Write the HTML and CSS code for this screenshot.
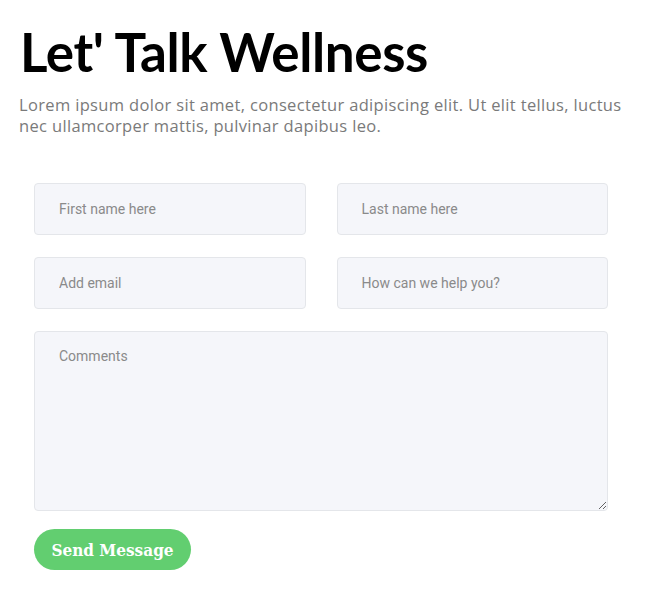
FILE: index.html
```html
<!DOCTYPE html>
<html lang="en">
<head>
<meta charset="utf-8">
<title>Let' Talk Wellness</title>
<link rel="stylesheet" href="styles.css">
</head>
<body>
<main class="page">
  <h1 class="title">Let' Talk Wellness</h1>
  <p class="lead">Lorem ipsum dolor sit amet, consectetur adipiscing elit. Ut elit tellus, luctus nec ullamcorper mattis, pulvinar dapibus leo.</p>
  <form class="contact">
    <div class="grid">
      <input class="field" type="text" placeholder="First name here">
      <input class="field" type="text" placeholder="Last name here">
      <input class="field" type="email" placeholder="Add email">
      <input class="field" type="text" placeholder="How can we help you?">
      <textarea class="field area" placeholder="Comments"></textarea>
    </div>
    <button class="send" type="button">Send Message</button>
  </form>
</main>
</body>
</html>
```
FILE: styles.css
```css
* { box-sizing: border-box; }
html, body { margin: 0; background: #fff; }
.page {
  padding: 22px 20px 0 19px;
}
.title {
  margin: 0 0 0 1px;
  font-family: "Lato", sans-serif;
  font-weight: 700;
  font-size: 53px;
  line-height: 60px;
  color: #000;
  letter-spacing: -0.4px;
}
.lead {
  margin: 12px 0 0 0;
  font-family: "Open Sans", sans-serif;
  font-size: 16.5px;
  line-height: 21px;
  letter-spacing: 0.34px;
  color: #7a7a7a;
}
.contact {
  width: 574px;
  margin: 47px 0 0 15px;
}
.grid {
  display: grid;
  grid-template-columns: 1fr 1fr;
  column-gap: 31px;
  row-gap: 22px;
}
.field {
  display: block;
  width: 100%;
  height: 52px;
  padding: 0 24px;
  background: #f5f6fa;
  border: 1px solid #e4e6ea;
  border-radius: 4px;
  font-family: "Roboto", sans-serif;
  font-size: 14px;
  color: #333;
  outline: none;
}
.field::placeholder { color: #8a8a8a; }
.area {
  grid-column: 1 / 3;
  height: 180px;
  padding: 16px 24px;
  resize: vertical;
}
.send {
  display: block;
  margin-top: 18px;
  width: 157px;
  height: 41px;
  border: none;
  border-radius: 21px;
  background: #62ce70;
  color: #fff;
  font-family: "DejaVu Serif", serif;
  font-stretch: condensed;
  font-weight: 700;
  font-size: 17px;
  cursor: pointer;
}
```
